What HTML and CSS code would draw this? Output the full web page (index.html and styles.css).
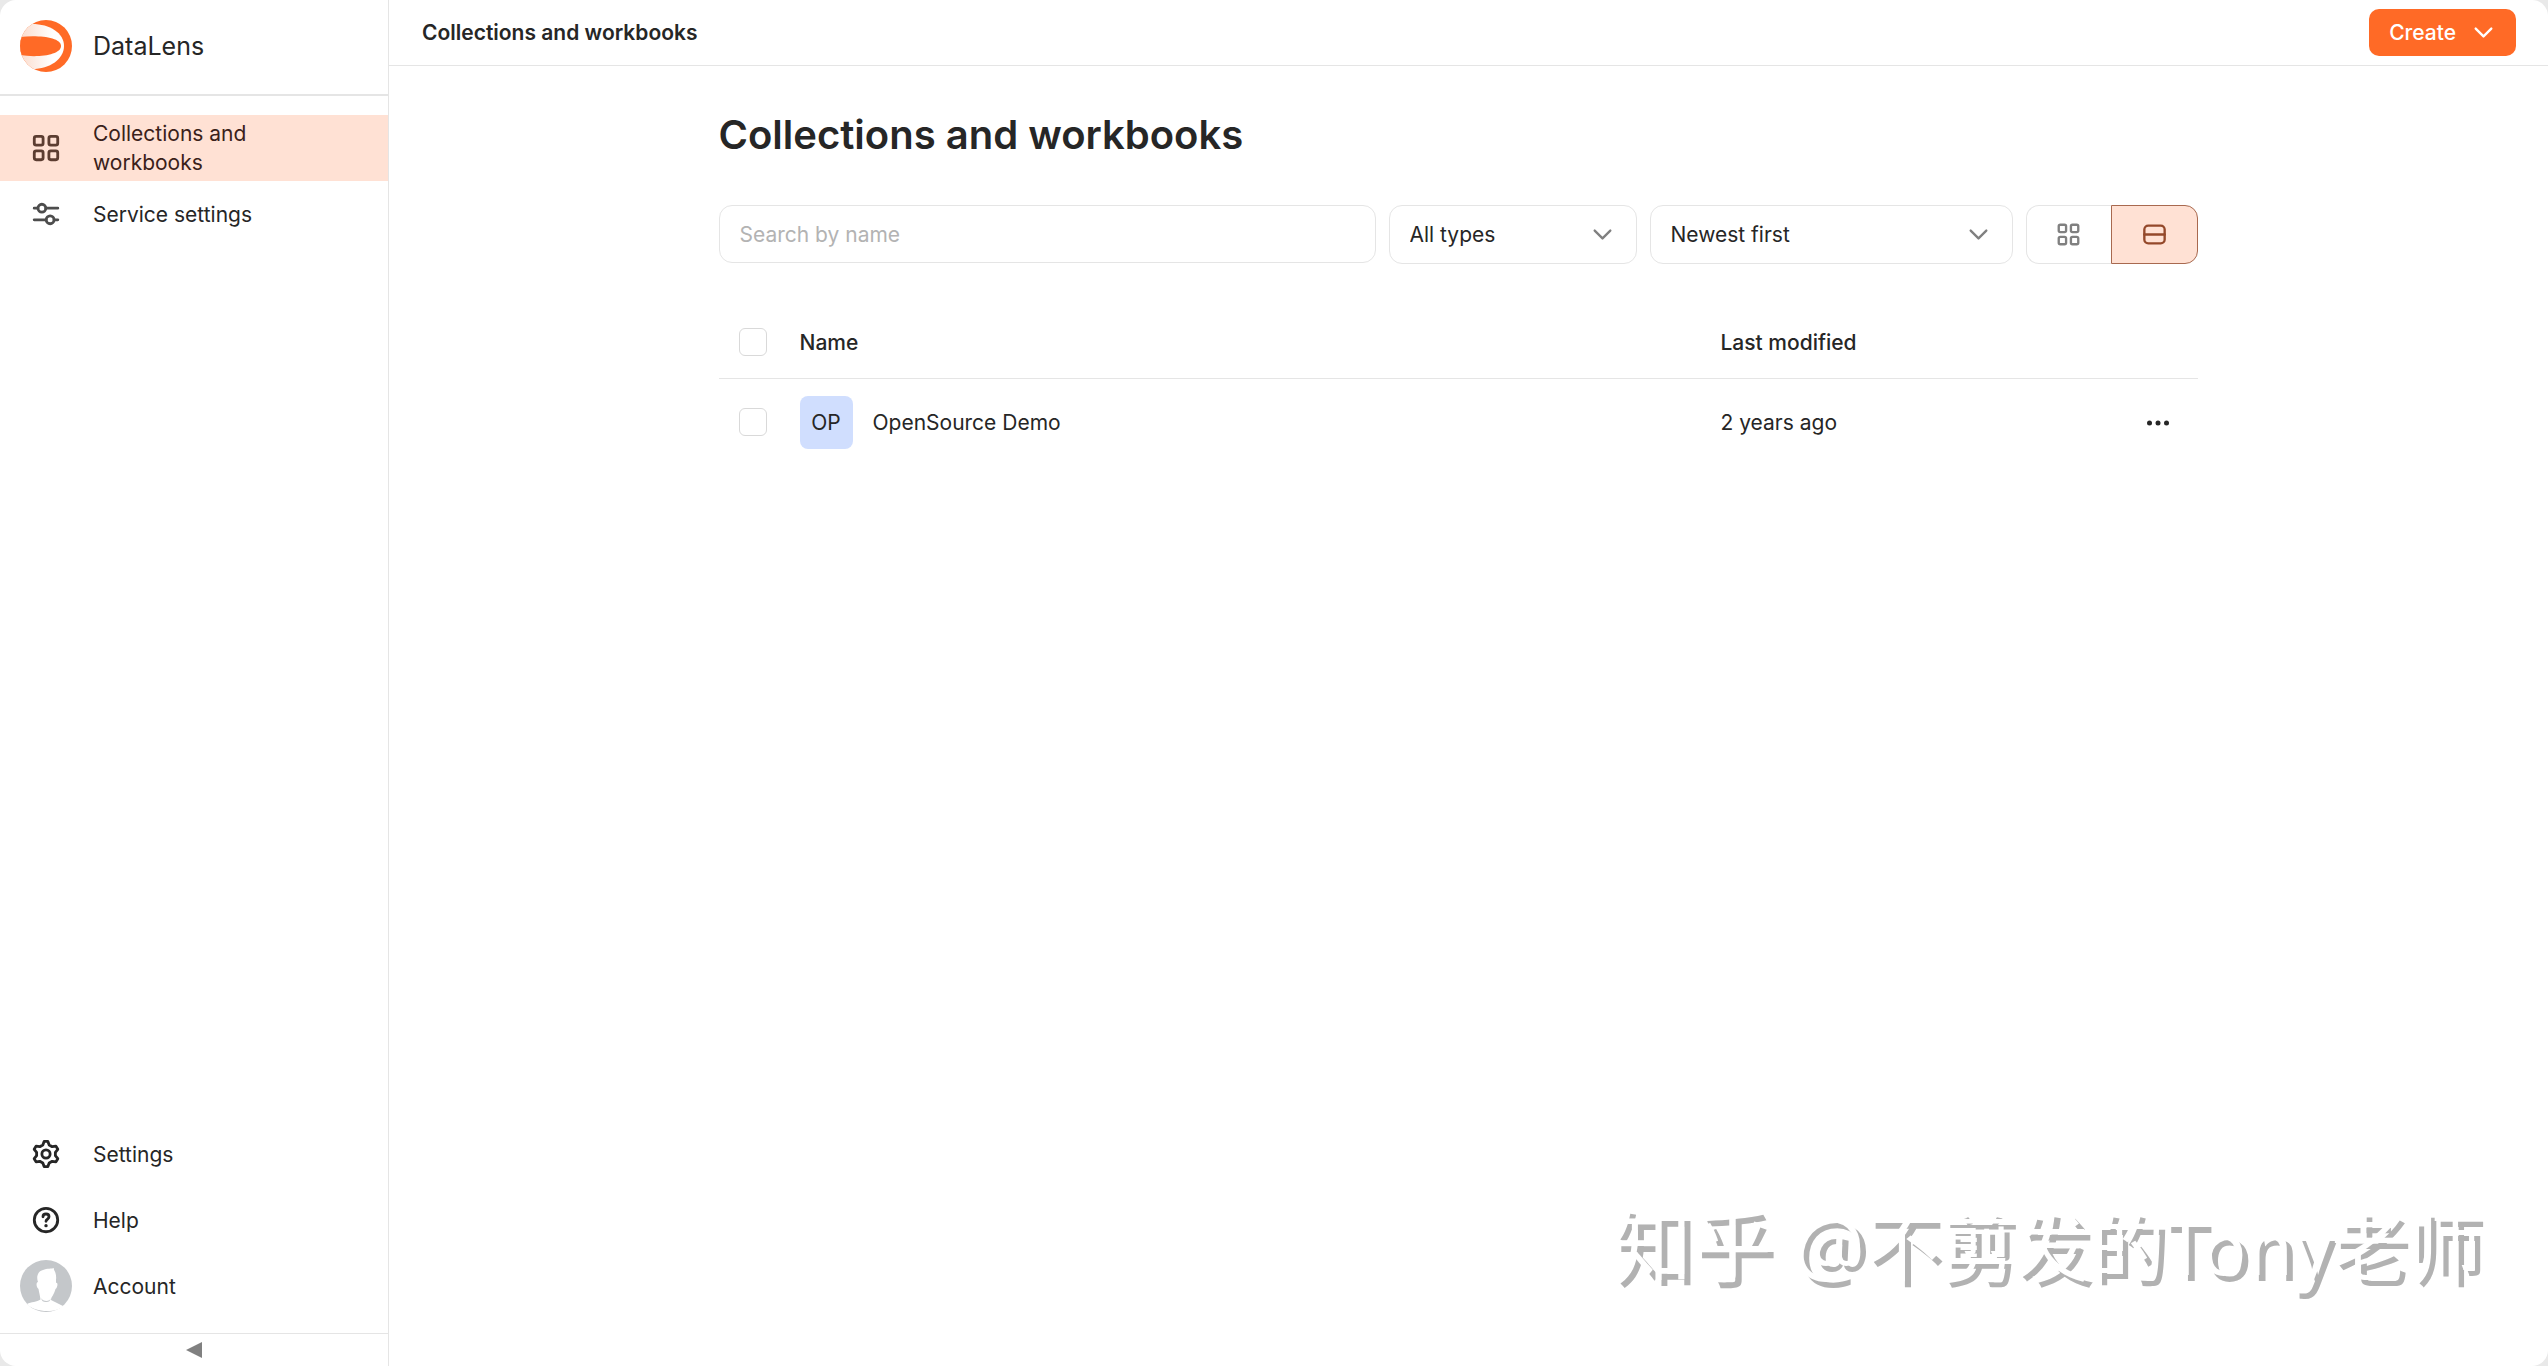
FILE: index.html
```html
<!DOCTYPE html>
<html lang="en">
<head>
  <meta charset="UTF-8">
  <meta name="viewport" content="width=device-width, initial-scale=1.0">
  <title>DataLens - Collections and workbooks</title>
  <link rel="stylesheet" href="styles.css">
</head>
<body>
  <div class="app">
    <aside class="sidebar">
      <a class="logo" href="#">
        <svg class="logo-icon" viewBox="0 0 52 52">
          <defs>
            <clipPath id="logo-clip"><circle cx="26" cy="26" r="26"/></clipPath>
            <linearGradient id="logo-fade" x1="0" y1="0" x2="44" y2="0" gradientUnits="userSpaceOnUse">
              <stop offset="0" stop-color="#fbdccd"/>
              <stop offset="0.75" stop-color="#fff"/>
            </linearGradient>
          </defs>
          <g clip-path="url(#logo-clip)">
            <rect width="52" height="52" fill="#ff6a26"/>
            <path d="M0 4H12C30 4 44 13 44 26S30 49 12 49H0Z" fill="url(#logo-fade)"/>
            <path d="M0 17C18 15 41 17 41 26S18 38 0 35Z" fill="#ff6a26"/>
          </g>
        </svg>
        <span>DataLens</span>
      </a>

      <nav class="menu">
        <a class="menu-item active" href="#">
          <span class="menu-icon">
            <svg class="icon" viewBox="0 0 16 16"><rect x="1.75" y="1.75" width="4.7" height="4.7" rx="1"/><rect x="9.55" y="1.75" width="4.7" height="4.7" rx="1"/><rect x="1.75" y="9.55" width="4.7" height="4.7" rx="1"/><rect x="9.55" y="9.55" width="4.7" height="4.7" rx="1"/></svg>
          </span>
          <span class="menu-text">Collections and workbooks</span>
        </a>
        <a class="menu-item" href="#">
          <span class="menu-icon">
            <svg class="icon" viewBox="0 0 16 16"><circle cx="5.8" cy="4.9" r="2.1"/><circle cx="10.2" cy="11.1" r="2.1"/><path d="M1.7 4.9h2M7.9 4.9h6.4M1.7 11.1h6.4M12.3 11.1h2"/></svg>
          </span>
          <span class="menu-text">Service settings</span>
        </a>
      </nav>

      <div class="menu footer-menu">
        <a class="menu-item" href="#">
          <span class="menu-icon">
            <svg class="icon" viewBox="0 0 16 16"><path d="M7 1.3H9L9.7 3.2 11.3 4.1 13.3 3.8 14.3 5.5 13 7.1V8.9L14.3 10.5 13.3 12.2 11.3 11.9 9.7 12.8 9 14.7H7L6.3 12.8 4.7 11.9 2.7 12.2 1.7 10.5 3 8.9V7.1L1.7 5.5 2.7 3.8 4.7 4.1 6.3 3.2Z"/><circle cx="8" cy="8" r="2.2"/></svg>
          </span>
          <span class="menu-text">Settings</span>
        </a>
        <a class="menu-item" href="#">
          <span class="menu-icon">
            <svg class="icon" viewBox="0 0 16 16"><circle cx="8" cy="8" r="6.25"/><path d="M6.4 6.3C6.4 4.3 9.6 4.3 9.6 6.3C9.6 7.5 8 7.5 8 8.7"/><circle class="dot" cx="8" cy="11" r="0.9"/></svg>
          </span>
          <span class="menu-text">Help</span>
        </a>
        <a class="menu-item" href="#">
          <span class="menu-icon">
            <svg class="avatar" viewBox="0 0 52 52">
              <circle cx="26" cy="26" r="26" fill="#c4c7ca"/>
              <path d="M18 22C16 17 18 11 23 10C27 8 32 9 34 8C33 10 37 12 36 20L36 23C38 22 38 27 35.500 29C34 35 31 37 31 40L43 46C38 53 14 53 7 44C11 42 17 42 20.500 39.500C20 36 19 32 18.500 29C16 27 16 22 18 22Z" fill="#fff"/>
              <path d="M21 38C23 42 30 42 31 38C30 41 29 42 26 42C23 42 22 41 21 38Z" fill="#c4c7ca"/>
            </svg>
          </span>
          <span class="menu-text">Account</span>
        </a>
      </div>

      <button class="collapse" type="button" aria-label="Collapse">
        <svg viewBox="0 0 16 16"><path d="M0 8 16 0V16Z"/></svg>
      </button>
    </aside>

    <main class="main">
      <header class="topbar">
        <span class="breadcrumb">Collections and workbooks</span>
        <button class="create" type="button">Create
          <svg class="icon chevron" viewBox="0 0 16 16"><path d="M3 5.500l5 5 5-5"/></svg>
        </button>
      </header>

      <div class="page">
        <section class="content">
          <h1>Collections and workbooks</h1>

          <form class="filters">
            <input class="search" type="text" placeholder="Search by name" aria-label="Search by name">
            <div class="select select-type">
              <select aria-label="Type">
                <option>All types</option>
              </select>
              <svg class="icon chevron" viewBox="0 0 16 16"><path d="M3 5.500l5 5 5-5"/></svg>
            </div>
            <div class="select select-sort">
              <select aria-label="Sort">
                <option>Newest first</option>
              </select>
              <svg class="icon chevron" viewBox="0 0 16 16"><path d="M3 5.500l5 5 5-5"/></svg>
            </div>
            <div class="view-mode">
              <label class="mode">
                <input type="radio" name="view" aria-label="Grid">
                <svg class="icon" viewBox="0 0 16 16"><rect x="1.75" y="1.75" width="4.7" height="4.7" rx="1"/><rect x="9.55" y="1.75" width="4.7" height="4.7" rx="1"/><rect x="1.75" y="9.55" width="4.7" height="4.7" rx="1"/><rect x="9.55" y="9.55" width="4.7" height="4.7" rx="1"/></svg>
              </label>
              <label class="mode">
                <input type="radio" name="view" aria-label="Table" checked>
                <svg class="icon" viewBox="0 0 16 16"><rect x="1.500" y="2.300" width="13" height="11.400" rx="2.500"/><path d="M1.500 8h13"/></svg>
              </label>
            </div>
          </form>

          <table class="list">
            <thead>
              <tr>
                <th class="col-check"><input type="checkbox" aria-label="Select all"></th>
                <th>Name</th>
                <th class="col-date">Last modified</th>
                <th class="col-actions"></th>
              </tr>
            </thead>
            <tbody>
              <tr>
                <td class="col-check"><input type="checkbox" aria-label="Select OpenSource Demo"></td>
                <td>
                  <a class="entry" href="#"><span class="badge">OP</span><span>OpenSource Demo</span></a>
                </td>
                <td class="col-date">2 years ago</td>
                <td class="col-actions">
                  <button class="more" type="button" aria-label="More">
                    <svg viewBox="0 0 24 6"><circle cx="3.500" cy="3" r="2.500"/><circle cx="12" cy="3" r="2.500"/><circle cx="20.500" cy="3" r="2.500"/></svg>
                  </button>
                </td>
              </tr>
            </tbody>
          </table>
        </section>
      </div>
    </main>

    <div class="watermark" lang="zh-CN"><span class="watermark-site">知乎 @</span>不剪发的Tony老师</div>
  </div>
</body>
</html>
```

FILE: styles.css
```css
* {
  box-sizing: border-box;
}
body {
  margin: 0;
  background: #e9e9e9;
  color: #262626;
  font-family: Inter, "Noto Sans CJK SC", sans-serif;
  font-size: 21px;
  line-height: 29px;
}
a {
  color: inherit;
  text-decoration: none;
}
button, input, select {
  font: inherit;
  color: inherit;
}
button {
  cursor: pointer;
}
.app {
  position: relative;
  display: flex;
  min-height: 100vh;
  background: #fff;
  border-radius: 16px;
  overflow: hidden;
}
.icon {
  width: 30px;
  height: 30px;
  fill: none;
  stroke: currentColor;
  stroke-width: 1.5;
  stroke-linecap: round;
  stroke-linejoin: round;
}
.icon .dot {
  fill: currentColor;
  stroke: none;
}

/* sidebar */
.sidebar {
  display: flex;
  flex-direction: column;
  flex: none;
  width: 389px;
  border-right: 1px solid #e5e5e5;
}
.logo {
  display: flex;
  align-items: center;
  gap: 21px;
  height: 96px;
  padding: 0 20px 2px;
  border-bottom: 2px solid #e5e5e5;
  font-size: 25px;
}
.logo-icon, .avatar {
  display: block;
  width: 52px;
  height: 52px;
}
.menu {
  padding-top: 19px;
}
.menu-item {
  display: flex;
  align-items: center;
  gap: 21px;
  height: 66px;
  padding: 0 20px;
}
.menu-icon {
  display: flex;
  justify-content: center;
  flex: none;
  width: 52px;
  color: #4d4d4d;
}
.menu-text {
  max-width: 200px;
}
.menu-item.active {
  background: #ffe1d4;
  color: #3a211a;
}
.active .menu-icon {
  color: #5c3d31;
}
.footer-menu {
  margin-top: auto;
  padding-bottom: 14px;
}
.footer-menu .menu-icon {
  color: #262626;
}
.collapse {
  display: flex;
  align-items: center;
  justify-content: center;
  height: 33px;
  padding: 0;
  border: none;
  border-top: 1px solid #e5e5e5;
  background: none;
}
.collapse svg {
  width: 16px;
  height: 16px;
  fill: #808080;
}

/* main */
.main {
  flex: 1;
  min-width: 0;
}
.topbar {
  display: flex;
  align-items: center;
  justify-content: space-between;
  height: 66px;
  padding: 0 32px 0 33px;
  border-bottom: 1px solid #e5e5e5;
}
.breadcrumb {
  font-weight: 600;
}
.create {
  display: flex;
  align-items: center;
  gap: 15px;
  height: 47px;
  padding: 0 20px;
  border: none;
  border-radius: 10px;
  background: #ff6a26;
  color: #fff;
  font-weight: 500;
}
.create .chevron {
  width: 25px;
  height: 25px;
}
.page {
  padding: 43px 21px 0 0;
}
.content {
  max-width: 1479px;
  margin: 0 auto;
}
h1 {
  margin: 0;
  font-size: 40px;
  font-weight: 600;
  line-height: 52px;
}
.filters {
  display: flex;
  gap: 13px;
  margin-top: 44px;
}
.search {
  flex: 1;
  min-width: 0;
  height: 58px;
  padding: 0 20px;
  border: 1px solid #e5e5e5;
  border-radius: 13px;
  background: #fff;
}
.search::placeholder {
  color: #b3b3b3;
}
.select {
  position: relative;
}
.select-type {
  width: 248px;
}
.select-sort {
  width: 363px;
}
.select select {
  width: 100%;
  height: 59px;
  padding: 0 20px;
  border: 1px solid #e5e5e5;
  border-radius: 13px;
  background: #fff;
  appearance: none;
}
.select .chevron {
  position: absolute;
  top: 17px;
  right: 22px;
  width: 25px;
  height: 25px;
  color: #808080;
  pointer-events: none;
}
.view-mode {
  display: flex;
  width: 172px;
  height: 59px;
}
.mode {
  display: flex;
  align-items: center;
  justify-content: center;
  flex: 1;
  border: 1px solid #e5e5e5;
  color: #808080;
  cursor: pointer;
}
.mode:first-child {
  border-right: none;
  border-radius: 13px 0 0 13px;
}
.mode:last-child {
  border-radius: 0 13px 13px 0;
}
.mode:has(input:checked) {
  border-color: #a8694f;
  background: #ffe1d4;
  color: #94482a;
}
.mode input {
  position: absolute;
  opacity: 0;
}
.mode .icon {
  width: 25px;
  height: 25px;
}

/* table */
.list {
  width: 100%;
  margin-top: 44px;
  border-collapse: collapse;
  table-layout: fixed;
}
.list th, .list td {
  padding: 0;
  text-align: left;
}
.list th {
  height: 70px;
  border-bottom: 1px solid #e5e5e5;
  font-weight: 500;
}
.list td {
  height: 89px;
}
.list .col-check {
  width: 81px;
  padding: 0 0 2px 20px;
}
.list .col-date {
  width: 380px;
}
.list .col-actions {
  width: 97px;
  padding-right: 11px;
}
.list input {
  display: block;
  width: 28px;
  height: 28px;
  margin: 0;
  border: 1px solid #d9d9d9;
  border-radius: 6px;
  background: #fff;
  appearance: none;
}
.entry {
  display: flex;
  align-items: center;
  gap: 20px;
}
.badge {
  width: 53px;
  border-radius: 8px;
  background: #d0defe;
  line-height: 53px;
  text-align: center;
}
.more {
  display: flex;
  align-items: center;
  justify-content: center;
  width: 58px;
  height: 46px;
  margin-left: auto;
  padding: 0;
  border: none;
  background: none;
}
.more svg {
  width: 24px;
  height: 6px;
  fill: #262626;
}

.watermark {
  position: absolute;
  right: 67px;
  bottom: 70px;
  color: #fff;
  font-family: "Noto Sans", "Noto Sans CJK SC", sans-serif;
  font-size: 75px;
  line-height: 100px;
  text-shadow: 6px 6px 0 #b2b2b2;
  white-space: nowrap;
  pointer-events: none;
}
.watermark-site {
  font-size: 80px;
}
```
